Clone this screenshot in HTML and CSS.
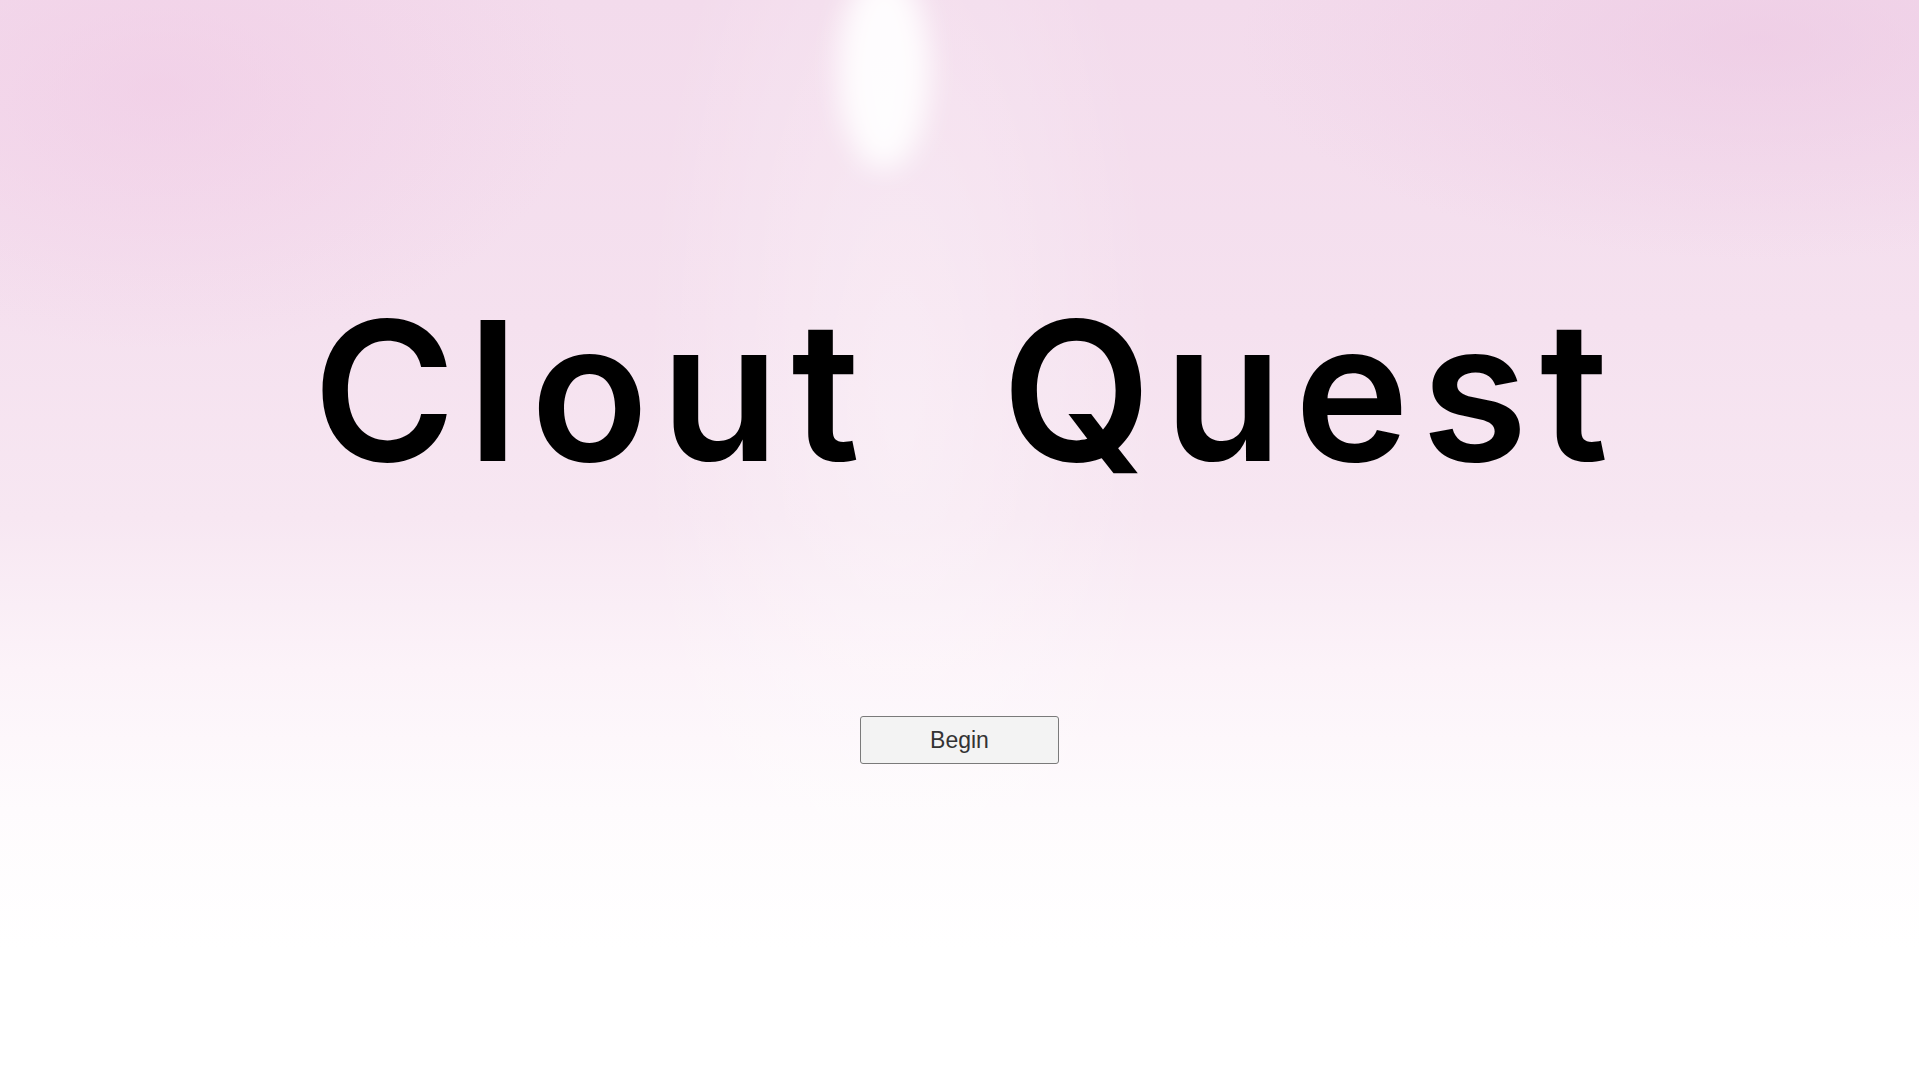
FILE: index.html
```html
<!DOCTYPE html>
<html lang="en">
<head>
  <meta charset="UTF-8">
  <meta name="viewport" content="width=device-width, initial-scale=1.0">
  <title>Clout Quest</title>
  <link rel="stylesheet" href="styles.css">
</head>
<body>
  <div class="glow"></div>

  <main class="title-screen">
    <h1 class="game-title">
      <span>Clout</span>
      <span>Quest</span>
    </h1>
    <button id="begin" class="begin-btn">Begin</button>
  </main>
</body>
</html>
```

FILE: styles.css
```css
html, body {
  margin: 0;
  height: 100%;
}
body {
  position: relative;
  overflow: hidden;
  font-family: Inter, 'Noto Sans', sans-serif;
  background:
    radial-gradient(ellipse 420px 260px at 160px 90px, rgba(240, 200, 228, 0.55), rgba(240, 200, 228, 0) 100%),
    radial-gradient(ellipse 520px 220px at 1760px 40px, rgba(236, 198, 226, 0.6), rgba(236, 198, 226, 0) 100%),
    radial-gradient(ellipse 260px 700px at 900px 420px, rgba(255, 255, 255, 0.35), rgba(255, 255, 255, 0) 100%),
    linear-gradient(to bottom, #f3dbec 0%, #f5e1ef 30%, #f7e7f2 48%, #fcf3f9 62%, #fefbfd 75%, #ffffff 88%);
}
/* soft light spot near the top edge */
.glow {
  position: absolute;
  left: 838px;
  top: -30px;
  width: 92px;
  height: 200px;
  border-radius: 50%;
  background: rgba(255, 255, 255, 0.9);
  filter: blur(14px);
  pointer-events: none;
}
.title-screen {
  position: relative;
  display: flex;
  flex-direction: column;
  align-items: center;
  padding-top: 294px;
}
.game-title {
  display: flex;
  gap: 130px;
  margin: 0 0 0 14px;
  font-size: 194px;
  font-weight: 600;
  line-height: 1;
  letter-spacing: 12px;
  color: #000;
}
.begin-btn {
  margin-top: 228px;
  width: 199px;
  height: 48px;
  background: #f3f3f3;
  border: 1px solid #7a7a7a;
  border-radius: 3px;
  font-family: 'Liberation Sans', Arial, sans-serif;
  font-size: 23px;
  color: #333;
  cursor: pointer;
}
.begin-btn:hover {
  background: #e9e9e9;
}
```
